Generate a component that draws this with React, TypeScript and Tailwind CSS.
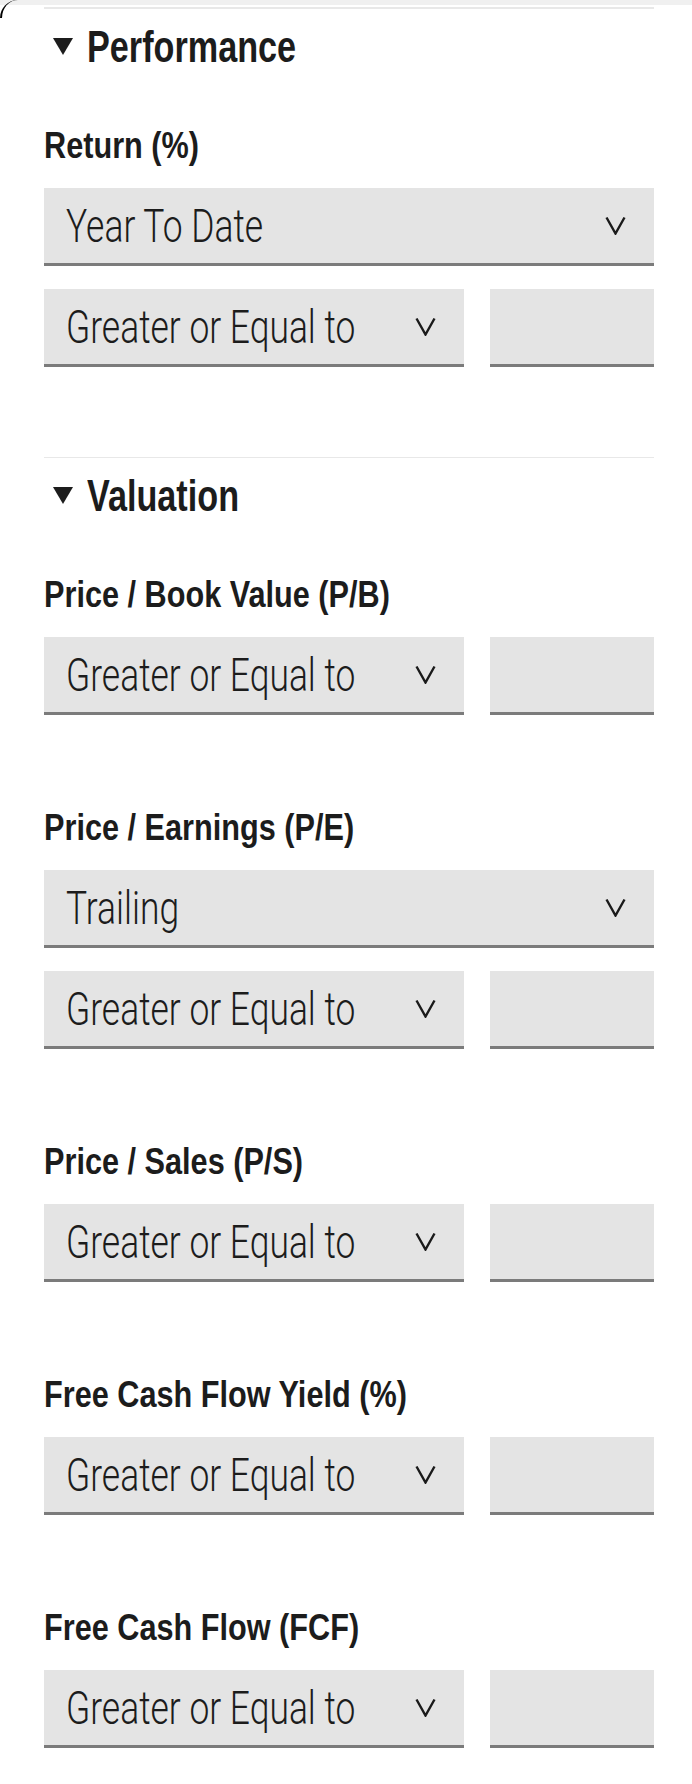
import React from "react";

const BOLD = "font-['Liberation_Sans','Arimo',Arial,sans-serif] font-bold";
const LIGHT = "font-['Roboto','Liberation_Sans',sans-serif] font-light";

function Chevron() {
  return (
    <svg width="21" height="19" viewBox="0 0 21 19" fill="none" className="shrink-0">
      <polyline
        points="1.5,1.5 10.5,17.5 19.5,1.5"
        stroke="#1a1a1a"
        strokeWidth="2.4"
        strokeLinejoin="miter"
        fill="none"
      />
    </svg>
  );
}

function SelectBox({ text, className = "" }: { text: string; className?: string }) {
  return (
    <div
      className={`h-[78px] bg-[#e4e4e4] border-b-[3px] border-[#7b7b7b] flex items-center pl-[22px] pr-[28px] ${className}`}
    >
      <div className="flex-1 min-w-0 whitespace-nowrap">
        <span
          className={`inline-block origin-left scale-x-[0.77] text-[46px] leading-none text-[#1c1c1c] ${LIGHT}`}
        >
          {text}
        </span>
      </div>
      <Chevron />
    </div>
  );
}

function CompareRow() {
  return (
    <div className="flex gap-[26px]">
      <SelectBox text="Greater or Equal to" className="w-[420px]" />
      <div className="flex-1 h-[78px] bg-[#e4e4e4] border-b-[3px] border-[#7b7b7b]" />
    </div>
  );
}

function Label({ text, first = false }: { text: string; first?: boolean }) {
  return (
    <div className={`h-[84px] flex items-center ${first ? "mt-[21px]" : "mt-[71px]"}`}>
      <span
        className={`inline-block origin-left scale-x-[0.84] whitespace-nowrap text-[36.5px] leading-none text-[#1c1c1c] ${BOLD}`}
      >
        {text}
      </span>
    </div>
  );
}

function Heading({ text }: { text: string }) {
  return (
    <div className="h-[74px] flex items-center">
      <svg width="20" height="17" viewBox="0 0 20 17" className="ml-[9px] mr-[14px] shrink-0">
        <polygon points="0,0 20,0 10,17" fill="#1c1c1c" />
      </svg>
      <span
        className={`inline-block origin-left scale-x-[0.76] whitespace-nowrap text-[45px] leading-none text-[#1c1c1c] ${BOLD}`}
      >
        {text}
      </span>
    </div>
  );
}

export default function App() {
  return (
    <div className="relative w-[692px] min-h-[1784px] bg-white overflow-hidden">
      <div className="absolute left-0 top-0 w-[22px] h-[18px] border-l-[2px] border-black rounded-tl-[22px]" />
      <div className="h-[5px] bg-[#f0f0f0]" />
      <div className="pl-[44px] pr-[38px]">
        <div className="mt-[2px] h-[2px] bg-[#e8e8e8]" />
        <Heading text="Performance" />
        <Label text="Return (%)" first />
        <SelectBox text="Year To Date" />
        <div className="mt-[23px]">
          <CompareRow />
        </div>

        <div className="mt-[90px] h-[1px] bg-[#e8e8e8]" />
        <Heading text="Valuation" />
        <Label text="Price / Book Value (P/B)" first />
        <CompareRow />

        <Label text="Price / Earnings (P/E)" />
        <SelectBox text="Trailing" />
        <div className="mt-[23px]">
          <CompareRow />
        </div>

        <Label text="Price / Sales (P/S)" />
        <CompareRow />

        <Label text="Free Cash Flow Yield (%)" />
        <CompareRow />

        <Label text="Free Cash Flow (FCF)" />
        <CompareRow />
      </div>
    </div>
  );
}
